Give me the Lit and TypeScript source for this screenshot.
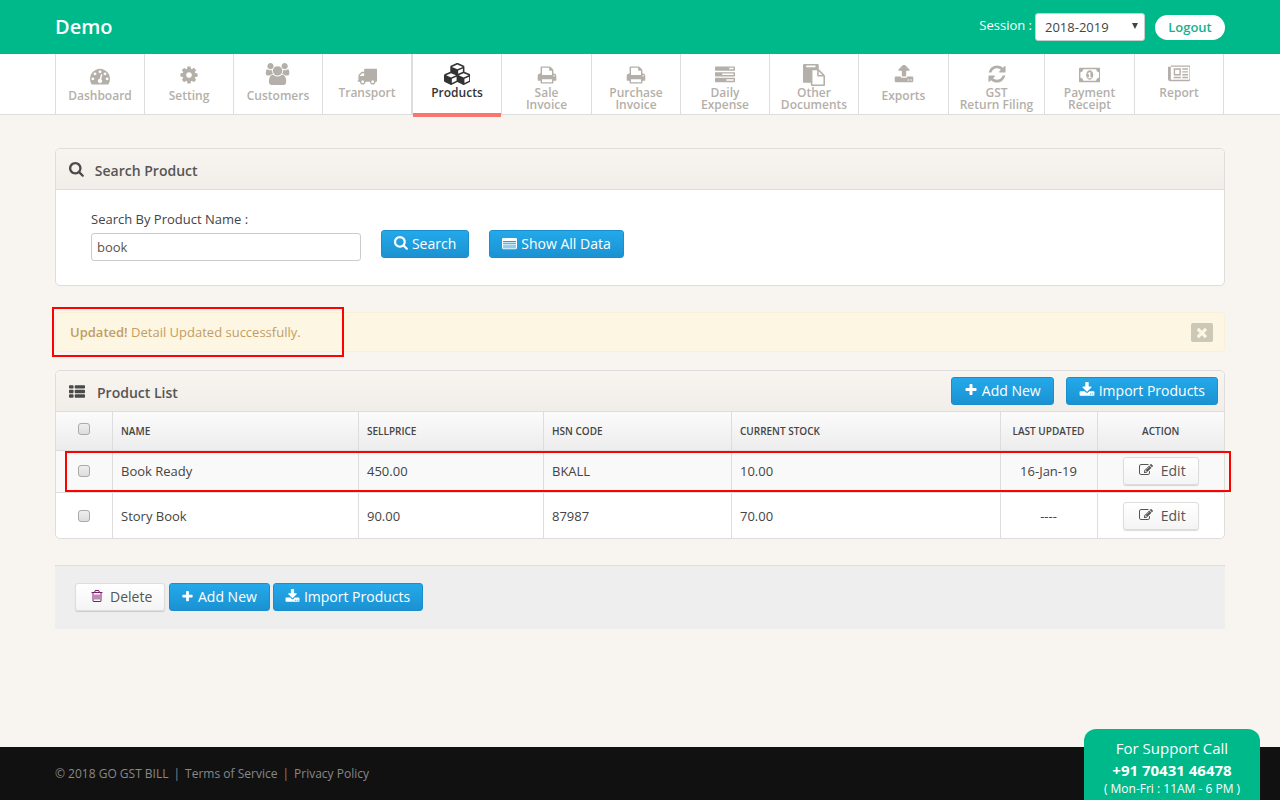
import { LitElement, css, html, svg } from 'lit'
import { customElement } from 'lit/decorators.js'

const FA = {
  search: ['0 0 1664 1792', 'M1152 704q0-185-131.500-316.500t-316.500-131.500-316.500 131.500-131.500 316.500 131.500 316.500 316.500 131.500 316.500-131.500 131.500-316.500zm512 832q0 52-38 90t-90 38q-54 0-90-38l-343-342q-179 124-399 124-143 0-273.500-55.500t-225-150-150-225-55.500-273.500 55.500-273.500 150-225 225-150 273.500-55.500 273.500 55.500 225 150 150 225 55.500 273.500q0 220-124 399l343 343q37 37 37 90z'],
  plus: ['0 0 1792 1792', 'M1600 736v192q0 40-28 68t-68 28h-416v416q0 40-28 68t-68 28h-192q-40 0-68-28t-28-68v-416h-416q-40 0-68-28t-28-68v-192q0-40 28-68t68-28h416v-416q0-40 28-68t68-28h192q40 0 68 28t28 68v416h416q40 0 68 28t28 68z'],
  cog: ['0 0 1792 1792', 'M1152 896q0-106-75-181t-181-75-181 75-75 181 75 181 181 75 181-75 75-181zm512-109v222q0 12-8 23t-20 13l-185 28q-19 54-39 91 35 50 107 138 10 12 10 25t-9 23q-27 37-99 108t-94 71q-12 0-26-9l-138-108q-44 23-91 38-16 136-29 186-7 28-36 28h-222q-14 0-24.500-8.500t-11.500-21.500l-28-184q-49-16-90-37l-141 107q-10 9-25 9-14 0-25-11-126-114-165-168-7-10-7-23 0-12 8-23 15-21 51-66.500t54-70.500q-27-50-41-99l-183-27q-13-2-21-12.500t-8-23.500v-222q0-12 8-23t19-13l186-28q14-46 39-92-40-57-107-138-10-12-10-24 0-10 9-23 26-36 98.500-107.500t94.500-71.500q13 0 26 10l138 107q44-23 91-38 16-136 29-186 7-28 36-28h222q14 0 24.500 8.500t11.500 21.500l28 184q49 16 90 37l142-107q9-9 24-9 13 0 25 10 129 119 165 170 7 8 7 22 0 12-8 23-15 21-51 66.500t-54 70.500q26 50 41 98l183 28q13 2 21 12.500t8 23.500z'],
  refresh: ['0 0 1792 1792', 'M1639 1056q0 5-1 7-64 268-268 434.500t-478 166.500q-146 0-282.500-55t-243.500-157l-129 129q-19 19-45 19t-45-19-19-45v-448q0-26 19-45t45-19h448q26 0 45 19t19 45-19 45l-137 137q71 66 161 102t187 36q134 0 250-65t186-179q11-17 53-117 8-23 30-23h192q13 0 22.500 9.500t9.500 22.500zm25-800v448q0 26-19 45t-45 19h-448q-26 0-45-19t-19-45 19-45l138-138q-148-137-349-137-134 0-250 65t-186 179q-11 17-53 117-8 23-30 23h-199q-13 0-22.500-9.500t-9.500-22.500v-7q65-268 270-434.500t480-166.500q146 0 284 55.500t245 156.500l130-129q19-19 45-19t45 19 19 45z'],
  print: ['0 0 1792 1792', 'M448 1536h896v-256h-896v256zm0-640h896v-384h-160q-40 0-68-28t-28-68v-160h-640v640zm1152 64q0-26-19-45t-45-19-45 19-19 45 19 45 45 19 45-19 19-45zm128 0v416q0 13-9.500 22.500t-22.500 9.500h-224v160q0 40-28 68t-68 28h-960q-40 0-68-28t-28-68v-160h-224q-13 0-22.500-9.500t-9.500-22.500v-416q0-79 56.500-135.500t135.500-56.500h64v-544q0-40 28-68t68-28h672q40 0 88 20t76 48l152 152q28 28 48 76t20 88v256h64q79 0 135.500 56.500t56.500 135.500z'],
  upload: ['0 0 1792 1792', 'M1344 1344q0-26-19-45t-45-19-45 19-19 45 19 45 45 19 45-19 19-45zm256 0q0-26-19-45t-45-19-45 19-19 45 19 45 45 19 45-19 19-45zm128-224v320q0 40-28 68t-68 28h-1472q-40 0-68-28t-28-68v-320q0-40 28-68t68-28h427q21 56 70.500 92t110.500 36h256q61 0 110.500-36t70.500-92h427q40 0 68 28t28 68zm-325-648q-17 40-59 40h-256v448q0 26-19 45t-45 19h-256q-26 0-45-19t-19-45v-448h-256q-42 0-59-40-17-39 14-69l448-448q18-19 45-19t45 19l448 448q31 30 14 69z'],
  download: ['0 0 1792 1792', 'M1344 1344q0-26-19-45t-45-19-45 19-19 45 19 45 45 19 45-19 19-45zm256 0q0-26-19-45t-45-19-45 19-19 45 19 45 45 19 45-19 19-45zm128-224v320q0 40-28 68t-68 28h-1472q-40 0-68-28t-28-68v-320q0-40 28-68t68-28h465l135 136q58 56 136 56t136-56l136-136h464q40 0 68 28t28 68zm-325-569q17 41-14 70l-448 448q-18 19-45 19t-45-19l-448-448q-31-29-14-70 17-39 59-39h256v-448q0-26 19-45t45-19h256q26 0 45 19t19 45v448h256q42 0 59 39z'],
  trash: ['0 0 1792 1792', 'M704 736v576q0 14-9 23t-23 9h-64q-14 0-23-9t-9-23v-576q0-14 9-23t23-9h64q14 0 23 9t9 23zm256 0v576q0 14-9 23t-23 9h-64q-14 0-23-9t-9-23v-576q0-14 9-23t23-9h64q14 0 23 9t9 23zm256 0v576q0 14-9 23t-23 9h-64q-14 0-23-9t-9-23v-576q0-14 9-23t23-9h64q14 0 23 9t9 23zm128 724v-948h-896v948q0 22 7 40.500t14.500 27 10.500 8.500h832q3 0 10.500-8.500t14.500-27 7-40.500zm-672-1076h448l-48-117q-7-9-17-11h-317q-10 2-17 11zm928 32v64q0 14-9 23t-23 9h-96v948q0 83-47 143.500t-113 60.500h-832q-66 0-113-58.500t-47-141.500v-952h-96q-14 0-23-9t-9-23v-64q0-14 9-23t23-9h309l70-167q15-37 54-63t79-26h320q40 0 79 26t54 63l70 167h309q14 0 23 9t9 23z'],
  edit: ['0 0 1792 1792', 'M888 1184l116-116-152-152-116 116v56h96v96h56zm440-720q-16-16-33 1l-350 350q-17 17-1 33t33-1l350-350q17-17 1-33zm80 594v190q0 119-84.500 203.500t-203.500 84.500h-832q-119 0-203.500-84.500t-84.500-203.500v-832q0-119 84.500-203.500t203.500-84.500h832q63 0 117 25 15 7 18 23 3 17-9 29l-49 49q-14 14-32 8-23-6-45-6h-832q-66 0-113 47t-47 113v832q0 66 47 113t113 47h832q66 0 113-47t47-113v-126q0-13 9-22l64-64q15-15 35-7t20 29zm-96-738l288 288-672 672h-288v-288zm444 132l-92 92-288-288 92-92q28-28 68-28t68 28l152 152q28 28 28 68t-28 68z'],
  thList: ['0 0 1792 1792', 'M512 1248v192q0 40-28 68t-68 28h-320q-40 0-68-28t-28-68v-192q0-40 28-68t68-28h320q40 0 68 28t28 68zm0-512v192q0 40-28 68t-68 28h-320q-40 0-68-28t-28-68v-192q0-40 28-68t68-28h320q40 0 68 28t28 68zm1280 512v192q0 40-28 68t-68 28h-960q-40 0-68-28t-28-68v-192q0-40 28-68t68-28h960q40 0 68 28t28 68zm-1280-1024v192q0 40-28 68t-68 28h-320q-40 0-68-28t-28-68v-192q0-40 28-68t68-28h320q40 0 68 28t28 68zm1280 512v192q0 40-28 68t-68 28h-960q-40 0-68-28t-28-68v-192q0-40 28-68t68-28h960q40 0 68 28t28 68zm0-512v192q0 40-28 68t-68 28h-960q-40 0-68-28t-28-68v-192q0-40 28-68t68-28h960q40 0 68 28t28 68z'],
  users: ['0 0 2048 1792', 'M657 896q-162 5-265 128h-134q-82 0-138-40.500t-56-118.500q0-353 124-353 6 0 43.500 21t97.500 42.500 119 21.500q67 0 133-23-5 37-5 66 0 139 81 256zm1071 637q0 120-73 189.500t-194 69.500h-874q-121 0-194-69.500t-73-189.500q0-53 3.500-103.500t14-109 26.500-108.500 43-97.500 62-81 85.500-53.500 111.500-20q10 0 43 21.500t73 48 107 48 135 21.500 135-21.500 107-48 73-48 43-21.500q61 0 111.500 20t85.500 53.500 62 81 43 97.500 26.500 108.500 14 109 3.500 103.500zm-1024-1277q0 106-75 181t-181 75-181-75-75-181 75-181 181-75 181 75 75 181zm704 384q0 159-112.500 271.500t-271.500 112.500-271.500-112.500-112.500-271.500 112.500-271.500 271.500-112.500 271.500 112.500 112.500 271.500zm576 225q0 78-56 118.500t-138 40.500h-134q-103-123-265-128 81-117 81-256 0-29-5-66 66 23 133 23 59 0 119-21.500t97.500-42.500 43.500-21q124 0 124 353zm-128-609q0 106-75 181t-181 75-181-75-75-181 75-181 181-75 181 75 75 181z'],
  truck: ['0 0 1792 1792', 'M640 1408q0-52-38-90t-90-38-90 38-38 90 38 90 90 38 90-38 38-90zm-384-512h384v-256h-158q-13 0-22 9l-195 195q-9 9-9 22v30zm1280 512q0-52-38-90t-90-38-90 38-38 90 38 90 90 38 90-38 38-90zm256-1088v1024q0 15-4 26.500t-13.500 18.500-16.500 11.500-23.500 6-22.500 2-25.500 0-22.500-.500q0 106-75 181t-181 75-181-75-75-181h-384q0 106-75 181t-181 75-181-75-75-181h-64q-3 0-22.500.500t-25.500 0-22.500-2-23.500-6-16.500-11.500-13.500-18.500-4-26.500q0-26 19-45t45-19v-320q0-8-.500-35t0-38 2.500-34.500 6.500-37 14-30.500 22.500-30l198-198q19-19 50.500-32t58.500-13h160v-192q0-26 19-45t45-19h1024q26 0 45 19t19 45z'],
  dashboard: ['0 0 1792 1792', 'M384 1152q0-53-37.500-90.500t-90.500-37.500-90.500 37.500-37.500 90.500 37.500 90.500 90.500 37.500 90.500-37.500 37.500-90.500zm192-448q0-53-37.500-90.500t-90.500-37.500-90.500 37.500-37.500 90.500 37.500 90.500 90.500 37.500 90.500-37.500 37.500-90.500zm428 481l101-382q6-26-7.500-48.500t-38.500-29.500-48 6.500-30 39.500l-101 382q-60 5-107 43.500t-63 98.500q-20 77 20 146t117 89 146-20 89-117q16-60-6-117t-72-91zm660-33q0-53-37.500-90.500t-90.500-37.500-90.500 37.500-37.500 90.500 37.500 90.500 90.500 37.500 90.500-37.500 37.500-90.500zm-640-640q0-53-37.500-90.500t-90.500-37.500-90.500 37.500-37.500 90.500 37.500 90.500 90.500 37.500 90.500-37.500 37.500-90.500zm448 192q0-53-37.500-90.500t-90.500-37.500-90.500 37.500-37.500 90.500 37.500 90.500 90.500 37.500 90.500-37.500 37.500-90.500zm320 448q0 261-141 483-19 29-54 29h-1402q-35 0-54-29-141-221-141-483 0-182 71-348t191-286 286-191 348-71 348 71 286 191 191 286 71 348z'],
  cubes: ['0 0 2048 1792', 'M640 1632l384-192v-314l-384 164v342zm-64-454l404-173-404-173-404 173zm1088 454l384-192v-314l-384 164v342zm-64-454l404-173-404-173-404 173zm-448-293l384-165v-266l-384 164v267zm-64-379l441-189-441-189-441 189zm1088 518v416q0 36-19 67t-52 47l-448 224q-25 14-57 14t-57-14l-448-224q-4-2-7-4-2 2-7 4l-448 224q-25 14-57 14t-57-14l-448-224q-33-16-52-47t-19-67v-416q0-38 21.500-70t56.500-48l434-186v-400q0-38 21.500-70t56.500-48l448-192q23-10 50-10t50 10l448 192q35 16 56.500 48t21.500 70v400l434 186q36 16 57 48t21 70z'],
  paste: ['0 0 1792 1792', 'M768 1664h896v-640h-416q-40 0-68-28t-28-68v-416h-384v1152zm256-1440v-64q0-13-9.500-22.500t-22.500-9.500h-704q-13 0-22.500 9.500t-9.500 22.500v64q0 13 9.500 22.500t22.500 9.500h704q13 0 22.500-9.500t9.500-22.500zm256 672h299l-299-299v299zm512 128v672q0 40-28 68t-68 28h-960q-40 0-68-28t-28-68v-160h-544q-40 0-68-28t-28-68v-1344q0-40 28-68t68-28h1088q40 0 68 28t28 68v328q21 13 36 28l408 408q28 28 48 76t20 88z'],
  money: ['0 0 1920 1792', 'M768 1184h384v-96h-128v-448h-114l-148 137 77 80q42-37 55-57h2v288h-128v96zm512-288q0 70-21 142t-59.500 134-101.500 101-138 39-138-39-101.500-101-59.500-134-21-142 21-142 59.500-134 101.500-101 138-39 138 39 101.500 101 59.500 134 21 142zm512 256v-512q-106 0-181-75t-75-181h-1152q0 106-75 181t-181 75v512q106 0 181 75t75 181h1152q0-106 75-181t181-75zm128-832v1152q0 26-19 45t-45 19h-1792q-26 0-45-19t-19-45v-1152q0-26 19-45t45-19h1792q26 0 45 19t19 45z'],
  newspaper: ['0 0 2048 1792', 'M1024 512h-384v384h384v-384zm128 640v128h-640v-128h640zm0-768v640h-640v-640h640zm640 768v128h-512v-128h512zm0-256v128h-512v-128h512zm0-256v128h-512v-128h512zm0-256v128h-512v-128h512zm128 960v-1088h-1664v1088q0 35-11 64h1611q26 0 45-19t19-45zm128-1216v1216q0 80-56 136t-136 56h-1664q-80 0-136-56t-56-136v-1088h256v-128h1792z'],
  tasks: ['0 0 1792 1792', 'M1024 1408h640v-128h-640v128zm-384-512h1024v-128h-1024v128zm640-512h384v-128h-384v128zm512 832v256q0 26-19 45t-45 19h-1664q-26 0-45-19t-19-45v-256q0-26 19-45t45-19h1664q26 0 45 19t19 45zm0-512v256q0 26-19 45t-45 19h-1664q-26 0-45-19t-19-45v-256q0-26 19-45t45-19h1664q26 0 45 19t19 45zm0-512v256q0 26-19 45t-45 19h-1664q-26 0-45-19t-19-45v-256q0-26 19-45t45-19h1664q26 0 45 19t19 45z'],
  listAlt: ['0 0 1792 1792', 'M160 224h1472q66 0 113 47t47 113v1024q0 66-47 113t-113 47h-1472q-66 0-113-47t-47-113v-1024q0-66 47-113t113-47zm-32 384v128h1536v-128zm0 256v128h1536v-128zm0 256v128h1536v-128zm0 256v64q0 14 9 23t23 9h1472q14 0 23-9t9-23v-64z'],
  close: ['0 0 1408 1792', 'M1298 1322q0 40-28 68l-136 136q-28 28-68 28t-68-28l-294-294-294 294q-28 28-68 28t-68-28l-136-136q-28-28-28-68t28-68l294-294-294-294q-28-28-28-68t28-68l136-136q28-28 68-28t68 28l294 294 294-294q28-28 68-28t68 28l136 136q28 28 28 68t-28 68l-294 294 294 294q28 28 28 68z'],
}

type IconName = keyof typeof FA

const icon = (name: IconName, size: number) => {
  const [box, d] = FA[name]
  return html`<svg class="ic" viewBox=${box} height=${size} width=${(size * +box.split(' ')[2]) / 1792}>${svg`<path fill="currentColor" fill-rule=${name === 'listAlt' ? 'evenodd' : 'nonzero'} d=${d}></path>`}</svg>`
}

const NAV: { label: string[]; icon: IconName; w: number; size: number; top: number; gap: number; active?: boolean }[] = [
  { label: ['Dashboard'], icon: 'dashboard', w: 90, size: 20, top: 12, gap: 2 },
  { label: ['Setting'], icon: 'cog', w: 89, size: 20, top: 11, gap: 3 },
  { label: ['Customers'], icon: 'users', w: 89, size: 22, top: 9, gap: 3 },
  { label: ['Transport'], icon: 'truck', w: 89, size: 20, top: 12, gap: -1 },
  { label: ['Products'], icon: 'cubes', w: 90, size: 22, top: 9, gap: 0, active: true },
  { label: ['Sale', 'Invoice'], icon: 'print', w: 90, size: 20, top: 11, gap: 0 },
  { label: ['Purchase', 'Invoice'], icon: 'print', w: 89, size: 20, top: 11, gap: 0 },
  { label: ['Daily', 'Expense'], icon: 'tasks', w: 89, size: 20, top: 11, gap: 0 },
  { label: ['Other', 'Documents'], icon: 'paste', w: 89, size: 22, top: 10, gap: -1 },
  { label: ['Exports'], icon: 'upload', w: 90, size: 20, top: 11, gap: 3 },
  { label: ['GST', 'Return Filing'], icon: 'refresh', w: 96, size: 20, top: 10, gap: 1 },
  { label: ['Payment', 'Receipt'], icon: 'money', w: 90, size: 20, top: 11, gap: 0 },
  { label: ['Report'], icon: 'newspaper', w: 89, size: 20, top: 10, gap: 1 },
]

const ROWS = [
  { name: 'Book Ready', price: '450.00', hsn: 'BKALL', stock: '10.00', updated: '16-Jan-19' },
  { name: 'Story Book', price: '90.00', hsn: '87987', stock: '70.00', updated: '----' },
]

@customElement('app-root')
export class AppRoot extends LitElement {
  static styles = css`
    :host {
      display: flex;
      flex-direction: column;
      min-height: 800px;
      background: #f8f5f0;
      font-family: 'Open Sans', sans-serif;
      font-size: 13px;
      color: #444;
      overflow: hidden;
    }
    * { box-sizing: border-box; }
    .ic { display: block; flex: none; }

    .top {
      height: 54px;
      background: #00b98a;
      padding: 0 55px;
      display: flex;
      align-items: center;
      color: #fff;
    }
    .brand { font-size: 20px; font-weight: 600; flex: 1; margin-bottom: 2px; }
    .session { font-size: 13px; margin: 0 3px 5px 0; }
    .select { position: relative; margin-right: 10px; }
    .select select {
      display: block;
      appearance: none;
      width: 110px;
      height: 28px;
      padding: 1px 9px;
      border: 1px solid #ccc;
      border-radius: 3px;
      background: #fff;
      font: 13px 'Open Sans', sans-serif;
      color: #444;
    }
    .select::after {
      content: '';
      position: absolute;
      right: 7px;
      top: 10px;
      border: 3.5px solid transparent;
      border-top: 6px solid #444;
      border-bottom: 0;
    }
    .logout {
      width: 70px;
      height: 25px;
      border-radius: 13px;
      background: #fff;
      color: #19b08f;
      font-size: 13px;
      font-weight: 600;
      display: flex;
      align-items: center;
      justify-content: center;
    }

    .nav {
      height: 61px;
      flex: none;
      background: #fff;
      border-bottom: 1px solid #ddd;
      padding-left: 55px;
      display: flex;
    }
    .item {
      height: 60px;
      border-right: 1px solid #ddd;
      display: flex;
      flex-direction: column;
      align-items: center;
      color: #b4afa9;
      font-size: 12px;
      font-weight: 600;
      line-height: 12px;
      text-align: center;
      position: relative;
    }
    .item:first-child { border-left: 1px solid #ddd; }
    .item.on { color: #333; border-left: 1px solid #ddd; }
    .item.on::after {
      content: '';
      position: absolute;
      left: 0;
      right: 0;
      bottom: -3px;
      height: 4px;
      background: #f8766d;
    }

    main { flex: 1; padding: 33px 55px 0; }
    .card {
      background: #fff;
      border: 1px solid #ddd;
      border-radius: 5px;
    }
    .card-head {
      height: 41px;
      padding: 0 13px;
      display: flex;
      align-items: center;
      background: linear-gradient(#f8f5f0, #f1ede8);
      border-bottom: 1px solid #ddd;
      border-radius: 5px 5px 0 0;
      font-size: 14px;
      font-weight: 600;
      color: #555;
    }
    .card-head > .ic { color: #4a4a4a; margin-right: 11px; }
    .search-head { padding-top: 2px; }
    .list-head { padding: 0 6px 0 13px; }
    .list-head > .ic { margin: 2px 12px 0 0; }
    .list-head .title { flex: 1; margin-top: 2px; }
    .list-head .btn + .btn { margin-left: 12px; }
    .search { height: 95px; padding: 20px 35px 0; display: flex; }
    .search label { display: block; font-size: 13px; line-height: 18px; margin: 0 0 5px; color: #444; }
    .search input {
      display: block;
      width: 270px;
      height: 28px;
      padding: 0 5px;
      border: 1px solid #ccc;
      border-radius: 3px;
      font: 13px 'Open Sans', sans-serif;
      color: #555;
    }
    .search .btn { margin: 20px 0 0 20px; }

    .btn {
      height: 28px;
      padding: 0 12px 2px;
      display: inline-flex;
      align-items: center;
      gap: 4px;
      border: 1px solid #1b8fcd;
      border-radius: 3px;
      background: linear-gradient(#23a9ea, #1b92d1);
      color: #fff;
      font-size: 14px;
      font-weight: 400;
      white-space: nowrap;
    }
    .btn.light {
      background: linear-gradient(#fff, #f4f4f4);
      border: 1px solid #ddd;
      box-shadow: 0 1px 1px rgba(0, 0, 0, 0.15);
      color: #555;
      gap: 8px;
    }
    .btn.light .ic { color: #555; }
    .btn.light .del .ic { color: #7a1f6e; }

    .alert {
      position: relative;
      margin: 26px 0 18px;
      height: 40px;
      padding: 0 14px;
      display: flex;
      align-items: center;
      justify-content: space-between;
      background: #fdf6e3;
      border: 1px solid #f9f0d8;
      border-radius: 4px;
      color: #c29d62;
      font-size: 13px;
    }
    .alert b { font-weight: 600; }
    .alert-frame {
      position: absolute;
      left: -4px;
      top: -6px;
      width: 292px;
      height: 50px;
      border: 2px solid #f00;
    }
    .x {
      width: 22px;
      height: 19px;
      margin-right: -3px;
      display: flex;
      align-items: center;
      justify-content: center;
      border-radius: 2px;
      background: #cbc8b8;
      color: #fdf6e3;
    }

    .table-wrap { position: relative; }
    table { width: 100%; border-collapse: collapse; table-layout: fixed; }
    th, td { border-left: 1px solid #ddd; padding: 0 8px 0 8.5px; text-align: left; }
    th:first-child, td:first-child { border-left: 0; text-align: center; padding: 0; }
    th {
      height: 38px;
      background: linear-gradient(#fbfbfb, #ececec);
      font-size: 10px;
      font-weight: 600;
      text-transform: uppercase;
      color: #444;
    }
    th input[type='checkbox'] { margin-bottom: 3px; }
    td { height: 42px; font-size: 13px; color: #444; border-top: 1px solid #ddd; }
    tr.even td { height: 46px; padding-top: 2px; background: #fff; }
    tr.odd td { background: #f9f9f9; }
    .c0 { width: 56px; }
    .c1 { width: 246px; }
    .c2 { width: 185px; }
    .c3 { width: 188px; }
    .c4 { width: 269px; }
    .c5 { width: 97px; }
    th.mid, td.mid { text-align: center; padding: 0; }
    tr.even td.mid { padding-top: 2px; }
    tr.even td:first-child { padding-top: 2px; border-radius: 0 0 0 5px; }
    tr.even td:last-child { border-radius: 0 0 5px 0; }
    .edit { width: 76px; height: 28px; padding: 0 0 2px 15px; margin: 0 auto; display: flex; }
    input[type='checkbox'] {
      appearance: none;
      display: block;
      margin: 0 auto;
      width: 12px;
      height: 12px;
      border: 1px solid #aaa;
      border-radius: 3px;
      background: linear-gradient(#eee, #ddd);
    }
    .row-frame {
      position: absolute;
      left: 9px;
      top: 39px;
      width: 1166px;
      height: 41px;
      border: 2px solid #f00;
      pointer-events: none;
    }

    .bar {
      margin-top: 26px;
      height: 64px;
      padding: 17px 20px 0;
      background: #eeeeee;
      border-top: 1px solid #ddd;
      display: flex;
      gap: 4px;
    }
    .bar .btn { padding: 0 12px 2px 11px; }
    .bar .btn + .btn + .btn { margin-left: -1px; }
    .bar .btn.light { width: 90px; padding: 0 0 2px 14px; gap: 6px; }

    footer {
      position: relative;
      flex: none;
      height: 53px;
      padding: 0 55px;
      display: flex;
      align-items: center;
      gap: 5px;
      background: #111;
      color: #888;
      font-size: 12px;
    }
    .support {
      position: absolute;
      left: 1084px;
      top: -18px;
      width: 176px;
      height: 71px;
      padding-top: 9px;
      border-radius: 12px 12px 0 0;
      background: #00b98a;
      color: #fff;
      text-align: center;
      font-size: 12px;
      line-height: 14px;
    }
    .support .a { font-size: 15px; line-height: 20px; }
    .support .b { font-size: 15px; font-weight: 700; line-height: 24px; }
  `

  private navItem(n: (typeof NAV)[number]) {
    return html`<div class="item ${n.active ? 'on' : ''}" style="width:${n.w}px;padding-top:${n.top}px">
      <div style="margin-bottom:${n.gap + 2}px">${icon(n.icon, n.size)}</div>
      ${n.label.map((l) => html`<div>${l}</div>`)}
    </div>`
  }

  render() {
    return html`
      <div class="top">
        <div class="brand">Demo</div>
        <div class="session">Session :</div>
        <div class="select"><select><option>2018-2019</option></select></div>
        <div class="logout">Logout</div>
      </div>
      <div class="nav">${NAV.map((n) => this.navItem(n))}</div>
      <main>
        <div class="card">
          <div class="card-head search-head">${icon('search', 16)}<span>Search Product</span></div>
          <div class="search">
            <div>
              <label>Search By Product Name :</label>
              <input type="text" value="book" />
            </div>
            <div class="btn">${icon('search', 15)}Search</div>
            <div class="btn">${icon('listAlt', 15)}Show All Data</div>
          </div>
        </div>
        <div class="alert">
          <span><b>Updated!</b> Detail Updated successfully.</span>
          <div class="x">${icon('close', 15)}</div>
          <div class="alert-frame"></div>
        </div>
        <div class="card">
          <div class="card-head list-head">
            ${icon('thList', 16)}
            <span class="title">Product List</span>
            <div class="btn">${icon('plus', 14)}Add New</div>
            <div class="btn">${icon('download', 16)}Import Products</div>
          </div>
          <div class="table-wrap">
            <table>
              <thead>
                <tr>
                  <th class="c0"><input type="checkbox" /></th>
                  <th class="c1">Name</th>
                  <th class="c2">Sellprice</th>
                  <th class="c3">HSN Code</th>
                  <th class="c4">Current Stock</th>
                  <th class="c5 mid">Last Updated</th>
                  <th class="mid">Action</th>
                </tr>
              </thead>
              <tbody>
                ${ROWS.map(
                  (r, i) => html`<tr class=${i ? 'even' : 'odd'}>
                    <td><input type="checkbox" /></td>
                    <td>${r.name}</td>
                    <td>${r.price}</td>
                    <td>${r.hsn}</td>
                    <td>${r.stock}</td>
                    <td class="mid">${r.updated}</td>
                    <td class="mid"><div class="btn light edit">${icon('edit', 14)}Edit</div></td>
                  </tr>`,
                )}
              </tbody>
            </table>
            <div class="row-frame"></div>
          </div>
        </div>
        <div class="bar">
          <div class="btn light"><span class="del">${icon('trash', 14)}</span>Delete</div>
          <div class="btn">${icon('plus', 13)}Add New</div>
          <div class="btn">${icon('download', 15)}Import Products</div>
        </div>
      </main>
      <footer>
        <span>© 2018 GO GST BILL</span><span>|</span><span>Terms of Service</span><span>|</span><span>Privacy Policy</span>
        <div class="support">
          <div class="a">For Support Call</div>
          <div class="b">+91 70431 46478</div>
          <div>( Mon-Fri : 11AM - 6 PM )</div>
        </div>
      </footer>
    `
  }
}
